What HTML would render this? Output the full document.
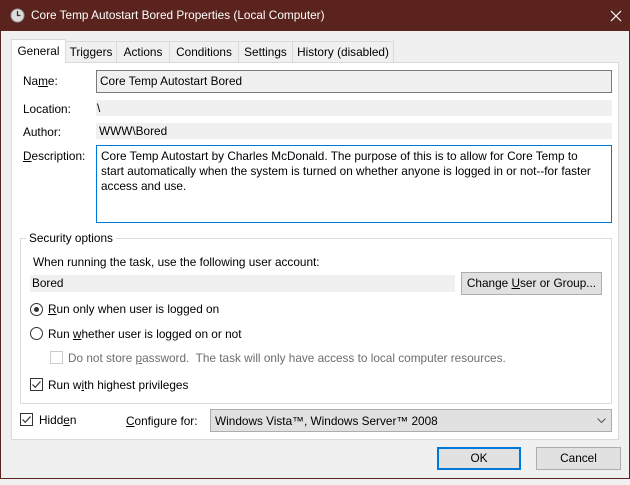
<!DOCTYPE html>
<html><head><style>
*{box-sizing:border-box;margin:0;padding:0}
body{width:630px;height:485px;background:#f0f0f0;font-family:"Liberation Sans",sans-serif;font-size:11.8px;color:#000;position:relative;overflow:hidden}
.a{position:absolute;white-space:nowrap}
u{text-decoration:underline}
.tab{position:absolute;top:41px;height:21px;border:1px solid #d9d9d9;border-bottom:none;background:#f0f0f0;text-align:center;line-height:20px}
.btn{position:absolute;background:#e1e1e1;border:1px solid #adadad;text-align:center}
.radio{position:absolute;width:13px;height:13px;border:1px solid #333;border-radius:50%;background:#fff}
.cb{position:absolute;width:13px;height:13px;border:1px solid #333;background:#fff}
</style></head><body>
<div class="a" style="left:0;top:0;width:630px;height:31px;background:#5a231d"></div>
<svg class="a" style="left:10px;top:8px" width="15" height="15"><circle cx="7.5" cy="7.5" r="6.5" fill="#ddd" stroke="#999"/><path d="M7.5 3v4.5h3" stroke="#333" stroke-width="1.3" fill="none"/></svg>
<div class="a" style="left:31px;top:8px;color:#fff;font-size:11.8px">Core Temp Autostart Bored Properties (Local Computer)</div>
<svg class="a" style="left:610px;top:10px" width="12" height="12"><path d="M1 1L11 11M11 1L1 11" stroke="#fff" stroke-width="1.2"/></svg>
<div class="a" style="left:0;top:31px;width:1px;height:448px;background:#5a231d"></div>
<div class="a" style="left:629px;top:31px;width:1px;height:448px;background:#5a231d"></div>
<div class="a" style="left:0;top:478px;width:630px;height:1px;background:#5a231d"></div>

<div class="a" style="left:11px;top:62px;width:608px;height:378px;background:#fff;border:1px solid #d9d9d9"></div>
<div class="tab" style="left:65px;width:52px">Triggers</div>
<div class="tab" style="left:116px;width:54px">Actions</div>
<div class="tab" style="left:169px;width:70px">Conditions</div>
<div class="tab" style="left:238px;width:55px">Settings</div>
<div class="tab" style="left:292px;width:102px">History (disabled)</div>
<div class="tab" style="left:11px;top:39px;width:55px;height:24px;background:#fff;line-height:22px">General</div>

<div class="a" style="left:23px;top:74px">Na<u>m</u>e:</div>
<div class="a" style="left:96px;top:70px;width:516px;height:23px;border:1px solid #7a7a7a;background:#f0f0f0;padding:3px 0 0 3px">Core Temp Autostart Bored</div>
<div class="a" style="left:23px;top:102px">Location:</div>
<div class="a" style="left:96px;top:100px;width:516px;height:16px;background:#f0f0f0;padding:1px 0 0 1px">\</div>
<div class="a" style="left:23px;top:125px">Author:</div>
<div class="a" style="left:96px;top:123px;width:516px;height:16px;background:#f0f0f0;padding:1px 0 0 3px">WWW\Bored</div>
<div class="a" style="left:23px;top:149px"><u>D</u>escription:</div>
<div class="a" style="left:96px;top:145px;width:516px;height:78px;border:1px solid #0078d7;background:#fff;padding:3px 4px;line-height:15px;overflow:hidden">Core Temp Autostart by Charles McDonald. The purpose of this is to allow for Core Temp to<br>start automatically when the system is turned on whether anyone is logged in or not--for faster<br>access and use.</div>

<div class="a" style="left:20px;top:238px;width:592px;height:166px;border:1px solid #dcdcdc"></div>
<div class="a" style="left:26px;top:231px;background:#fff;padding:0 3px">Security options</div>
<div class="a" style="left:33px;top:255px">When running the task, use the following user account:</div>
<div class="a" style="left:30px;top:275px;width:425px;height:17px;background:#f0f0f0;padding:1px 0 0 2px">Bored</div>
<div class="btn" style="left:461px;top:272px;width:141px;height:23px;line-height:21px">Change <u>U</u>ser or Group...</div>
<div class="radio" style="left:30px;top:303px"></div><div class="a" style="left:34px;top:307px;width:5px;height:5px;border-radius:50%;background:#333"></div>
<div class="a" style="left:48px;top:302px"><u>R</u>un only when user is logged on</div>
<div class="radio" style="left:30px;top:327px"></div>
<div class="a" style="left:48px;top:327px">Run <u>w</u>hether user is logged on or not</div>
<div class="cb" style="left:50px;top:351px;border-color:#ccc"></div>
<div class="a" style="left:68px;top:351px;color:#6d6d6d">Do not store <u>p</u>assword.&nbsp; The task will only have access to local computer resources.</div>
<div class="cb" style="left:30px;top:378px"></div>
<svg class="a" style="left:31px;top:379px" width="11" height="11"><path d="M1.5 5.5L4.3 8.3L9.5 2.5" stroke="#333" stroke-width="1.2" fill="none"/></svg>
<div class="a" style="left:48px;top:378px">Run w<u>i</u>th highest privileges</div>

<div class="cb" style="left:20px;top:413px"></div>
<svg class="a" style="left:21px;top:414px" width="11" height="11"><path d="M1.5 5.5L4.3 8.3L9.5 2.5" stroke="#333" stroke-width="1.2" fill="none"/></svg>
<div class="a" style="left:39px;top:413px">Hidd<u>e</u>n</div>
<div class="a" style="left:126px;top:414px"><u>C</u>onfigure for:</div>
<div class="a" style="left:210px;top:409px;width:402px;height:23px;border:1px solid #adadad;background:#e1e1e1;padding:4px 0 0 4px">Windows Vista™, Windows Server™ 2008</div>
<svg class="a" style="left:597px;top:418px" width="9" height="6"><path d="M0.5 0.5L4.5 4.5L8.5 0.5" stroke="#555" fill="none"/></svg>

<div class="btn" style="left:437px;top:447px;width:84px;height:23px;border:2px solid #0078d7;line-height:19px">OK</div>
<div class="btn" style="left:536px;top:447px;width:85px;height:23px;line-height:21px">Cancel</div>
</body></html>
